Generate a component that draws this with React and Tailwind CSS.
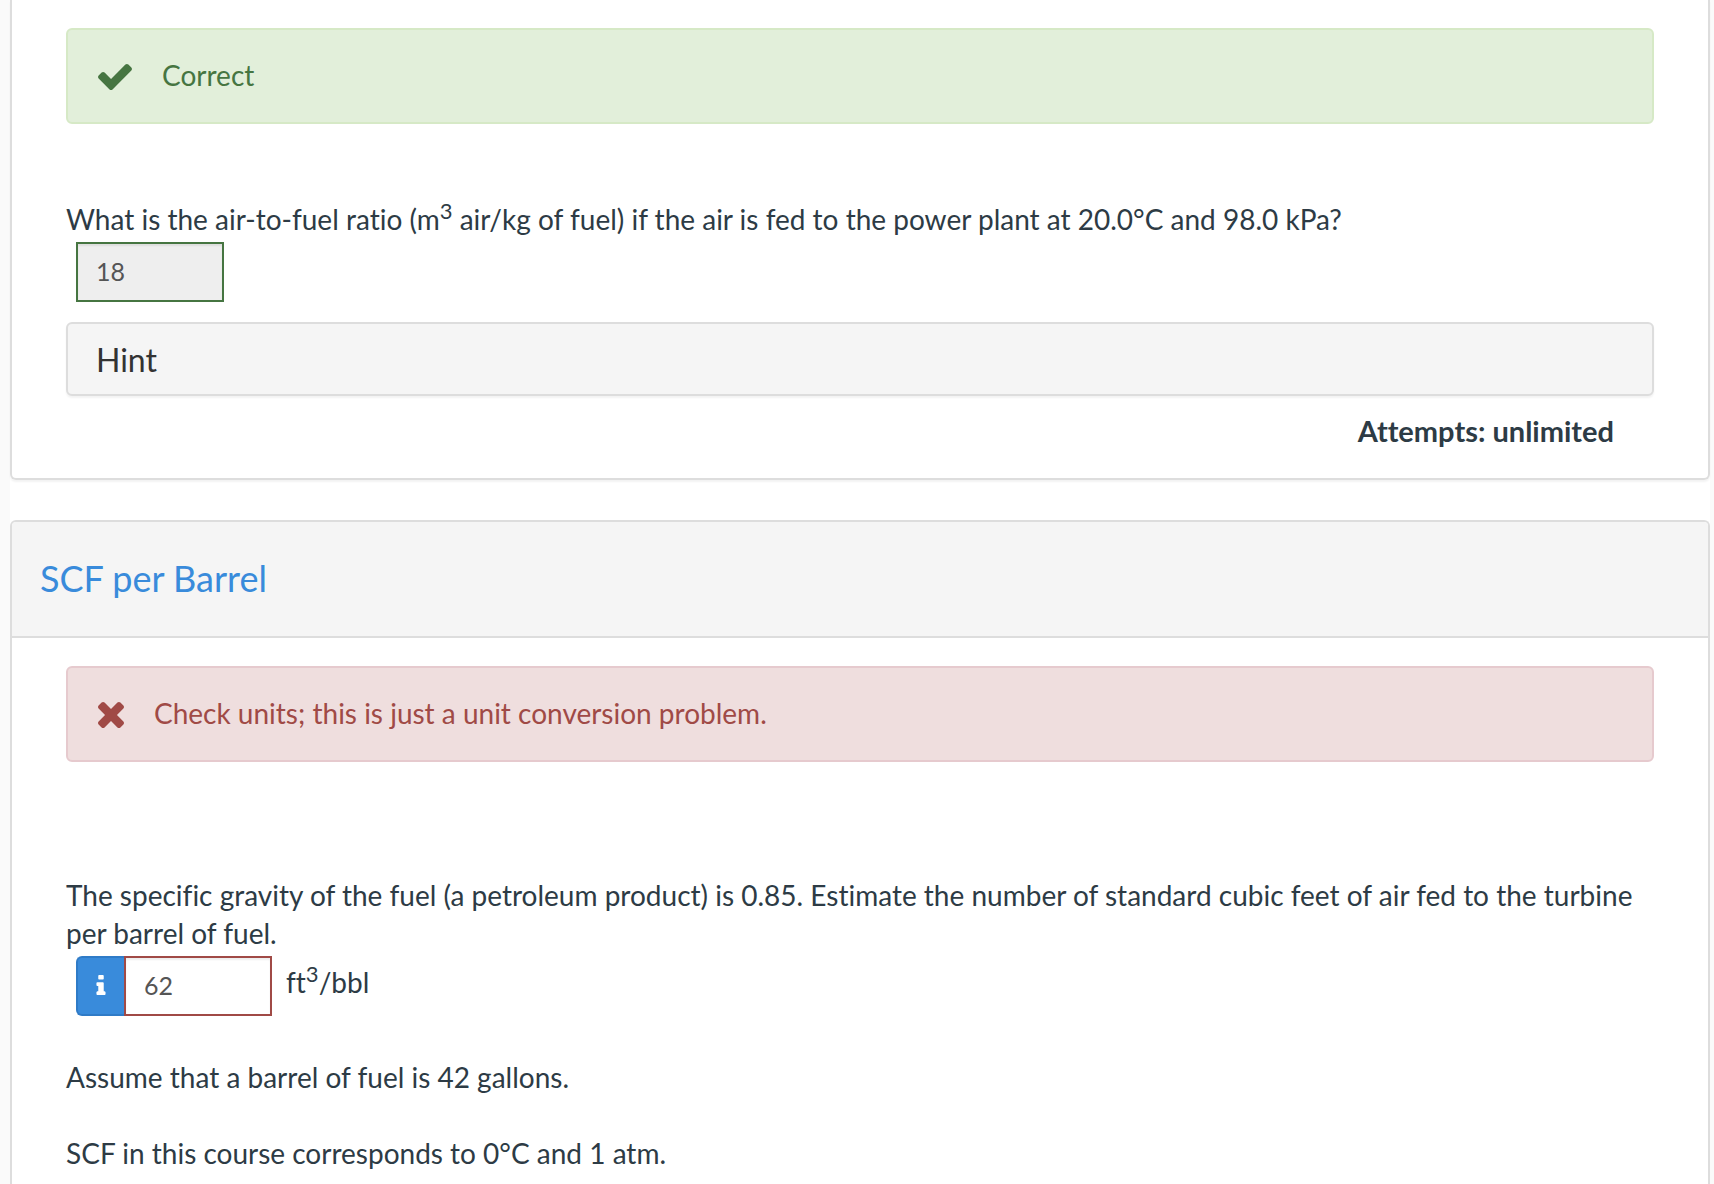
import React, { useState } from 'react'

const CheckIcon = () => (
  <svg viewBox="121 334 1550 1188" className="w-[34px] h-[26px] shrink-0" fill="currentColor" aria-hidden="true">
    <path d="M1671 566q0 40-28 68l-724 724-136 136q-28 28-68 28t-68-28l-136-136-362-362q-28-28-28-68t28-68l136-136q28-28 68-28t68 28l294 295 656-657q28-28 68-28t68 28l136 136q28 28 28 68z" />
  </svg>
)

const TimesIcon = () => (
  <svg viewBox="302 366 1188 1188" className="w-[26px] h-[26px] shrink-0" fill="currentColor" aria-hidden="true">
    <path d="M1490 1322q0 40-28 68l-136 136q-28 28-68 28t-68-28l-294-294-294 294q-28 28-68 28t-68-28l-136-136q-28-28-28-68t28-68l294-294-294-294q-28-28-28-68t28-68l136-136q28-28 68-28t68 28l294 294 294-294q28-28 68-28t68 28l136 136q28 28 28 68t-28 68l-294 294 294 294q28 28 28 68z" />
  </svg>
)

const InfoIcon = () => (
  <svg viewBox="576 128 640 1408" className="w-[10px] h-5" fill="currentColor" aria-hidden="true">
    <path d="M1216 1344v128q0 26-19 45t-45 19h-512q-26 0-45-19t-19-45v-128q0-26 19-45t45-19h64v-384h-64q-26 0-45-19t-19-45v-128q0-26 19-45t45-19h384q26 0 45 19t19 45v576h64q26 0 45 19t19 45zm-128-1152v192q0 26-19 45t-45 19h-256q-26 0-45-19t-19-45v-192q0-26 19-45t45-19h256q26 0 45 19t19 45z" />
  </svg>
)

const Cubed = () => <sup className="text-[22px] leading-none">3</sup>

const App = () => {
  const [scf, setScf] = useState('62')

  return (
    <div className="min-h-screen bg-[#fafafa] pl-[10px] pr-1 font-[Lato,sans-serif] text-[28px] leading-[38px] text-[#2d3b45] [font-variant-ligatures:none]">
      <main className="bg-white min-h-screen">

        {/* AIR TO FUEL RATIO */}
        <section className="rounded-b-md border-2 border-t-0 border-[#ddd] shadow-[0_2px_2px_rgba(0,0,0,0.05)] px-[54px] pt-7 pb-7">
          <div role="status" className="flex items-center gap-[30px] h-24 px-[30px] pt-[2px] rounded-md border-2 border-[#d6e9c6] bg-[#e2efda] text-[#467541]">
            <CheckIcon />
            <span className="pb-1">Correct</span>
          </div>

          <label htmlFor="ratio" className="block mt-[76px]">
            What is the air-to-fuel ratio (m<Cubed /> air/kg of fuel) if the air is fed to the power plant at 20.0°C and 98.0 kPa?
          </label>
          <input
            id="ratio"
            type="text"
            value="18"
            disabled
            className="block ml-[10px] mt-1 w-[148px] h-[60px] px-[18px] pb-[2px] border-2 border-[#467541] bg-[#eee] text-[25px] text-[#555] shadow-[inset_0_2px_2px_rgba(0,0,0,0.07)]"
          />

          <button
            type="button"
            className="block mt-5 w-full h-[74px] px-7 pt-[2px] text-left text-[32px] text-[#333] rounded-md border-2 border-[#ddd] bg-[#f5f5f5] shadow-[0_2px_2px_rgba(0,0,0,0.05)]"
          >
            Hint
          </button>

          <p className="mt-4 pr-10 text-right text-[29px] font-bold">Attempts: unlimited</p>
        </section>

        {/* SCF PER BARREL */}
        <section className="mt-10 rounded-t-md border-2 border-b-0 border-[#ddd]">
          <header className="flex items-center h-[116px] px-7 pb-[2px] rounded-t-sm border-b-2 border-[#ddd] bg-[#f5f5f5]">
            <h2 className="text-4xl text-[#398bdb]">SCF per Barrel</h2>
          </header>

          <div className="px-[54px] pt-7 pb-7">
            <div role="alert" className="flex items-center gap-[30px] h-24 px-[30px] pt-[2px] rounded-md border-2 border-[#e6cace] bg-[#efdede] text-[#a04a46]">
              <TimesIcon />
              <span className="pb-1">Check units; this is just a unit conversion problem.</span>
            </div>

            <label htmlFor="scf" className="block mt-[114px]">
              The specific gravity of the fuel (a petroleum product) is 0.85. Estimate the number of standard cubic feet of air fed to the turbine per barrel of fuel.
            </label>
            <div className="flex items-center ml-[10px] mt-1">
              <button
                type="button"
                aria-label="Answer information"
                className="flex items-center justify-center w-12 h-[60px] pb-[2px] rounded-l-md border-2 border-r-0 border-[#2f7bc7] bg-[#398bdb] text-white"
              >
                <InfoIcon />
              </button>
              <input
                id="scf"
                type="text"
                value={scf}
                onChange={(e) => setScf(e.target.value)}
                className="w-[148px] h-[60px] px-[18px] pb-[2px] border-2 border-[#a04a46] bg-white text-[25px] text-[#555] shadow-[inset_0_2px_2px_rgba(0,0,0,0.07)]"
              />
              <span className="ml-[14px] pb-2">ft<Cubed />/bbl</span>
            </div>

            <p className="mt-[42px]">Assume that a barrel of fuel is 42 gallons.</p>
            <p className="mt-[38px]">SCF in this course corresponds to 0°C and 1 atm.</p>
          </div>
        </section>
      </main>
    </div>
  )
}

export default App
